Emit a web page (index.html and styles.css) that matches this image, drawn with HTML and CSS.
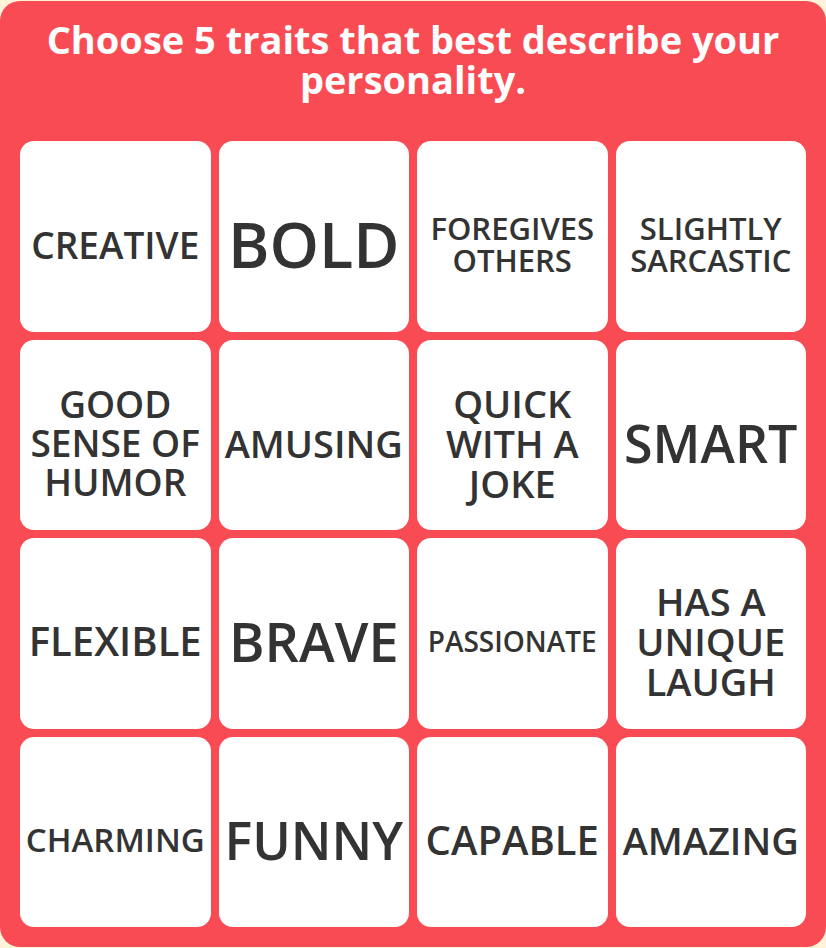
FILE: index.html
```
<!DOCTYPE html>
<html lang="en">
<head>
  <meta charset="UTF-8" />
  <meta name="viewport" content="width=device-width, initial-scale=1" />
  <title>Choose 5 traits</title>
  <link rel="stylesheet" href="styles.css">
</head>
<body>
  <div class="question">
    <h1 class="question-title">Choose 5 traits that best describe your personality.</h1>

    <div class="answers">
      <button type="button" class="answer size-4">CREATIVE</button>
      <button type="button" class="answer size-9">BOLD</button>
      <button type="button" class="answer size-2">FOREGIVES OTHERS</button>
      <button type="button" class="answer size-2">SLIGHTLY SARCASTIC</button>

      <button type="button" class="answer size-4">GOOD SENSE OF HUMOR</button>
      <button type="button" class="answer size-5">AMUSING</button>
      <button type="button" class="answer size-5">QUICK WITH A JOKE</button>
      <button type="button" class="answer size-7">SMART</button>

      <button type="button" class="answer size-6">FLEXIBLE</button>
      <button type="button" class="answer size-8">BRAVE</button>
      <button type="button" class="answer size-1">PASSIONATE</button>
      <button type="button" class="answer size-5">HAS A UNIQUE LAUGH</button>

      <button type="button" class="answer size-3">CHARMING</button>
      <button type="button" class="answer size-7">FUNNY</button>
      <button type="button" class="answer size-6">CAPABLE</button>
      <button type="button" class="answer size-5">AMAZING</button>
    </div>
  </div>
</body>
</html>
```

FILE: styles.css
```
* {
  box-sizing: border-box;
}
body {
  margin: 0;
  padding: 1px 0;
  background: #fff3d9;
  font-family: "Trebuchet MS", "Open Sans", sans-serif;
}
.question {
  padding: 18px 20px 20px;
  border-radius: 20px;
  background: #f94b53;
}
.question-title {
  margin: 0 0 42px;
  color: white;
  font-size: 38px;
  line-height: 40px;
  font-weight: bold;
  text-align: center;
}
.answers {
  display: grid;
  grid-template-columns: repeat(4, 1fr);
  gap: 8px;
}
.answer {
  display: flex;
  align-items: center;
  justify-content: center;
  min-width: 0;
  aspect-ratio: 1;
  padding: 16px 4px 0;
  border: none;
  border-radius: 14px;
  background: white;
  color: #333;
  font-family: inherit;
  font-weight: 600;
  text-align: center;
  cursor: pointer;
}

/* longer words get smaller text */
.size-1 {
  font-size: 28px;
  line-height: 32px;
}
.size-2 {
  font-size: 31px;
  line-height: 32px;
}
.size-3 {
  font-size: 33px;
  line-height: 36px;
}
.size-4 {
  font-size: 37px;
  line-height: 39px;
}
.size-5 {
  font-size: 38px;
  line-height: 40px;
}
.size-6 {
  font-size: 40px;
  line-height: 40px;
}
.size-7 {
  font-size: 52px;
  line-height: 52px;
}
.size-8 {
  font-size: 54px;
  line-height: 56px;
}
.size-9 {
  font-size: 63px;
  line-height: 64px;
}
```
